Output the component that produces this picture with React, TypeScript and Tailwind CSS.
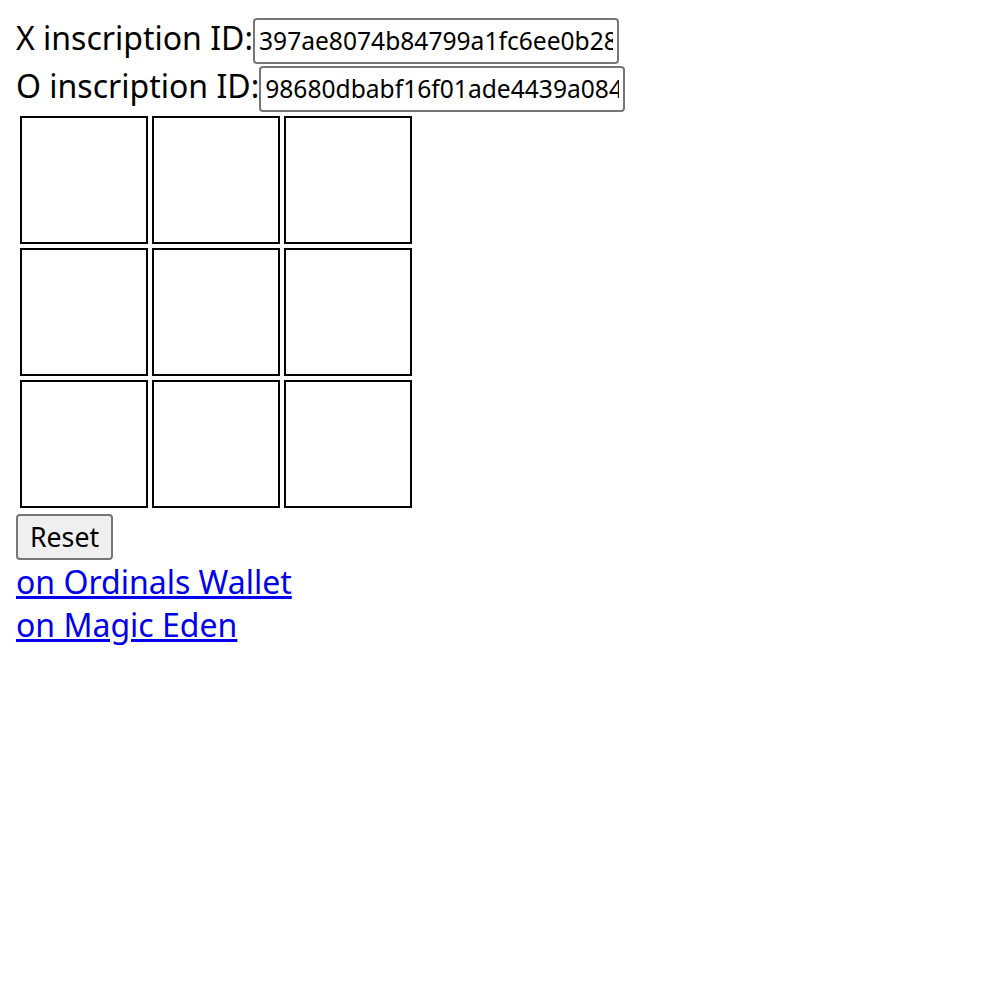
import { useState } from "react";

const X_ID = "397ae8074b84799a1fc6ee0b28d1c6b3e2e9c4f1a8b6d0e7c5f3a2b1c0d9e8f7i0";
const O_ID = "98680dbabf16f01ade4439a084e6c2d1b0a9f8e7d6c5b4a3928170f6e5d4c3b2i0";

export default function App() {
  const [xId, setXId] = useState(X_ID);
  const [oId, setOId] = useState(O_ID);
  const [board, setBoard] = useState<(string | null)[]>(Array(9).fill(null));
  const [turn, setTurn] = useState("X");

  const handleClick = (i: number) => {
    if (board[i]) return;
    const next = [...board];
    next[i] = turn;
    setBoard(next);
    setTurn(turn === "X" ? "O" : "X");
  };

  const reset = () => {
    setBoard(Array(9).fill(null));
    setTurn("X");
  };

  return (
    <div className="p-4 text-[32px] leading-[normal] text-black bg-white font-['Noto_Sans',sans-serif]">
      <div className="h-[48px]">
        X inscription ID:
        <input
          className="w-[366px] h-[46px] px-[4px] py-[2px] align-baseline text-[24.6px] border-2 border-[#767676] rounded-[4px] bg-white outline-none"
          value={xId}
          onChange={(e) => setXId(e.target.value)}
        />
      </div>
      <div className="h-[48px]">
        O inscription ID:
        <input
          className="w-[366px] h-[46px] px-[4px] py-[2px] align-baseline text-[24.6px] border-2 border-[#767676] rounded-[4px] bg-white outline-none"
          value={oId}
          onChange={(e) => setOId(e.target.value)}
        />
      </div>
      <div className="grid grid-cols-[repeat(3,128px)] gap-[4px] p-[4px] w-fit">
        {board.map((cell, i) => (
          <div
            key={i}
            onClick={() => handleClick(i)}
            className="w-[128px] h-[128px] border-2 border-black flex items-center justify-center text-[64px] cursor-pointer"
          >
            {cell}
          </div>
        ))}
      </div>
      <div className="pt-px">
        <button
          onClick={reset}
          className="h-[46px] px-[12px] text-[26.67px] leading-[normal] bg-[#efefef] border-2 border-[#767676] rounded-[4px]"
        >
          Reset
        </button>
      </div>
      <div>
        <a href="#" className="text-[#0000ee] underline">
          on Ordinals Wallet
        </a>
      </div>
      <div>
        <a href="#" className="text-[#0000ee] underline">
          on Magic Eden
        </a>
      </div>
    </div>
  );
}
